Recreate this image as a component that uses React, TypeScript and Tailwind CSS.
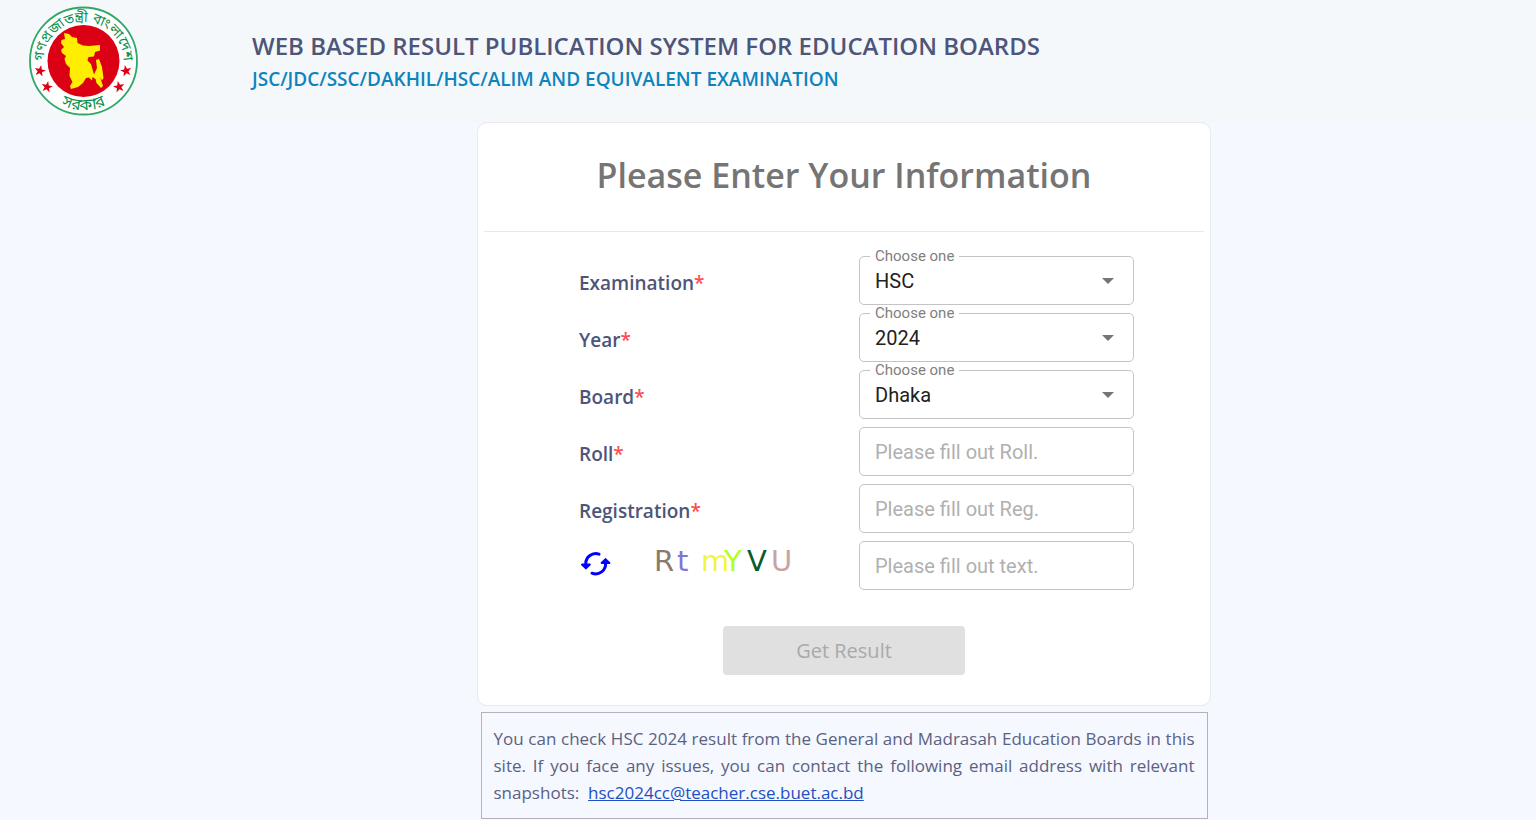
import type { ReactNode } from 'react';

const stars: [number, number][] = [
  [11, 64],
  [18, 80],
  [97, 64],
  [90, 80],
];

function starPoints(cx: number, cy: number, r: number) {
  const pts: string[] = [];
  for (let i = 0; i < 10; i++) {
    const radius = i % 2 === 0 ? r : r * 0.4;
    const a = -Math.PI / 2 + (i * Math.PI) / 5 + (cx < 54 ? 0.2 : -0.2);
    pts.push(`${(cx + radius * Math.cos(a)).toFixed(2)},${(cy + radius * Math.sin(a)).toFixed(2)}`);
  }
  return pts.join(' ');
}

function Emblem() {
  return (
    <svg viewBox="0 0 109 109" className="size-[109px] shrink-0 overflow-visible" role="img" aria-label="Government emblem">
      <defs>
        <path id="emblem-top" d="M15 61 A40 40 0 1 1 94 61" />
        <path id="emblem-bottom" d="M10 75 A49.2 49.2 0 0 0 99 75" />
      </defs>
      <circle cx="54.5" cy="54" r="53.5" fill="#fff" stroke="#2fa866" strokeWidth="1.8" />
      <circle cx="54.5" cy="54" r="36" fill="#dc0014" />
      <path
        fill="#ffee00"
        d="M35 26 L40 27 L43 30 L48 31 L48.5 36 L54 38.5 L60 39 L71 38 L71 43.5 L66 45 L65 49.5 L59.5 50 L58.5 53.5 L62 57 L64 64 L65 67.5 L68 61 L67 53 L70 52 L73 60 L74.5 71 L73 73.5 L71 70 L74 79 L72 81 L67.5 76 L66.5 72 L63.5 70 L63 73.5 L60 70.5 L57 71 L54 76 L49 80 L42 82 L41 79 L43.5 75 L40.5 69 L41 61 L37 57 L35.5 52 L37 49 L33 46 L32 43 L35 40 L32 36 L32.5 33 L36 32 Z"
      />
      {stars.map(([x, y]) => (
        <polygon key={`${x}-${y}`} points={starPoints(x, y, 6)} fill="#dc0014" />
      ))}
      <g fill="#0d9150" fontFamily="'Noto Sans Bengali', 'Noto Sans', sans-serif" textAnchor="middle">
        <text fontSize="14">
          <textPath href="#emblem-top" startOffset="50%">গণপ্রজাতন্ত্রী বাংলাদেশ</textPath>
        </text>
        <text fontSize="16">
          <textPath href="#emblem-bottom" startOffset="50%">সরকার</textPath>
        </text>
      </g>
    </svg>
  );
}

function RefreshIcon() {
  return (
    <svg viewBox="0 0 30 26" className="h-[26px] w-[30px]" fill="none" stroke="#0000ff" strokeWidth="3" strokeLinecap="round" aria-hidden="true">
      <path d="M18 3.2 A10 10 0 0 0 4.8 13.5" />
      <path d="M11 22.2 A10 10 0 0 0 24.6 12" />
      <path d="M1 13.6 H8.8 L4.9 17.4 Z" fill="#0000ff" strokeWidth="2" strokeLinejoin="round" />
      <path d="M20.6 11.9 H28.4 L24.5 8.1 Z" fill="#0000ff" strokeWidth="2" strokeLinejoin="round" />
    </svg>
  );
}

function Row({ id, label, children }: { id: string; label: string; children: ReactNode }) {
  return (
    <div className="grid grid-cols-[280px_275px] items-center">
      <label htmlFor={id} className="pt-1 text-[19px] leading-6 font-semibold text-[#4d5578]">
        {label}
        <span className="text-[#ff4d4f]">*</span>
      </label>
      {children}
    </div>
  );
}

const controlBox = 'h-[49px] w-full rounded-[5px] border border-[#c4c4c4] bg-white px-[15px] font-[Roboto,sans-serif] text-[20px]';

function SelectField({ id, label, options }: { id: string; label: string; options: string[] }) {
  return (
    <Row id={id} label={label}>
      <div className="relative">
        <select id={id} className={`${controlBox} block appearance-none text-[#212121]`}>
          {options.map((o) => (
            <option key={o}>{o}</option>
          ))}
        </select>
        <span className="absolute -top-2 left-[11px] bg-white px-[5px] font-[Roboto,sans-serif] text-[15px] leading-4 text-[#808080]">
          Choose one
        </span>
        <svg viewBox="0 0 12 6" className="pointer-events-none absolute top-[22px] right-5 h-[6px] w-3" aria-hidden="true">
          <path d="M0 0H12L6 6Z" fill="#757575" />
        </svg>
      </div>
    </Row>
  );
}

function TextField({ id, label, placeholder }: { id: string; label: string; placeholder: string }) {
  return (
    <Row id={id} label={label}>
      <input id={id} type="text" placeholder={placeholder} className={`${controlBox} text-[#212121] placeholder:text-[#b0b0b0]`} />
    </Row>
  );
}

function Captcha() {
  return (
    <svg viewBox="0 0 150 40" className="h-10 w-[150px]" fontFamily="'DejaVu Sans', sans-serif" fontSize="29" role="img" aria-label="Verification text">
      <text x="3" y="27" fill="#8b7a70">R</text>
      <text x="26" y="27" fill="#8474d8">t</text>
      <text x="50" y="27" fill="#f4f442">m</text>
      <text x="73" y="27" fill="#b4ff1a">Y</text>
      <text x="96" y="27" fill="#0b5a2c">V</text>
      <text x="120" y="27" fill="#c9a3a3">U</text>
    </svg>
  );
}

export default function App() {
  return (
    <div className="min-h-screen bg-[#f5f8ff] font-['Open_Sans',sans-serif]">
      <header className="flex items-start gap-[114px] bg-[#f4f8fb] pt-[7px] pb-[6px] pl-[29px]">
        <Emblem />
        <div className="pt-[23px]">
          <h1 className="text-[24px] leading-8 font-semibold text-[#4d5578]">WEB BASED RESULT PUBLICATION SYSTEM FOR EDUCATION BOARDS</h1>
          <h2 className="pt-1 text-[19px] leading-[26px] font-semibold text-[#0e83bd]">JSC/JDC/SSC/DAKHIL/HSC/ALIM AND EQUIVALENT EXAMINATION</h2>
        </div>
      </header>
      <main className="flex flex-col items-center gap-[6px] pl-[152px]">
        <form className="w-full max-w-[734px] rounded-[10px] border border-[#e6e9ee] bg-white px-[6px] pb-[30px]" onSubmit={(e) => e.preventDefault()}>
          <h2 className="border-b border-[#e8e8e8] pt-[28px] pb-[31px] text-center text-[34px] leading-[49px] font-semibold text-[#757575]">
            Please Enter Your Information
          </h2>
          <div className="flex flex-col gap-2 pt-6 pl-[95px]">
            <SelectField id="exam" label="Examination" options={['HSC', 'SSC', 'JSC']} />
            <SelectField id="year" label="Year" options={['2024', '2023']} />
            <SelectField id="board" label="Board" options={['Dhaka', 'Rajshahi']} />
            <TextField id="roll" label="Roll" placeholder="Please fill out Roll." />
            <TextField id="reg" label="Registration" placeholder="Please fill out Reg." />
            <div className="grid grid-cols-[280px_275px] items-center">
              <div className="flex items-center gap-10 pb-1 pl-[2px]">
                <button type="button" aria-label="Refresh verification text">
                  <RefreshIcon />
                </button>
                <Captcha />
              </div>
              <input type="text" aria-label="Verification text" placeholder="Please fill out text." className={`${controlBox} text-[#212121] placeholder:text-[#b0b0b0]`} />
            </div>
          </div>
          <div className="flex justify-center pt-9">
            <button type="submit" disabled className="h-[49px] w-[242px] rounded-[4px] bg-[#e0e0e0] text-[20px] font-medium text-[#a9a9a9]">
              Get Result
            </button>
          </div>
        </form>
        <p className="w-full max-w-[727px] border border-[#b5b3b8] px-3 py-3 text-justify text-[17px] leading-[27px] text-[#5b6180]">
          You can check HSC 2024 result from the General and Madrasah Education Boards in this site. If you face any issues, you can contact the following email address with relevant snapshots: &nbsp;
          <a href="mailto:hsc2024cc@teacher.cse.buet.ac.bd" className="text-[#1f4fc0] underline">hsc2024cc@teacher.cse.buet.ac.bd</a>
        </p>
      </main>
    </div>
  );
}
